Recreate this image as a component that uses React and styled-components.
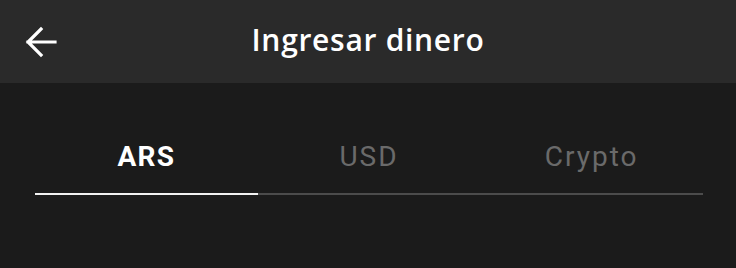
import React, { useState } from "react";
import styled, { createGlobalStyle } from "styled-components";

const GlobalStyle = createGlobalStyle`
  html, body {
    margin: 0;
    padding: 0;
    background: #1b1b1b;
  }
  * {
    box-sizing: border-box;
  }
`;

const TABS = ["ARS", "USD", "Crypto"];

function BackArrow() {
  return (
    <svg width="34" height="34" viewBox="0 0 34 34" fill="none">
      <path
        d="M31 17H4M17 4L4 17L17 30"
        stroke="#fff"
        strokeWidth="3.2"
        strokeLinecap="square"
        strokeLinejoin="miter"
      />
    </svg>
  );
}

function App() {
  const [active, setActive] = useState(0);

  return (
    <Page>
      <GlobalStyle />
      <Header>
        <BackButton aria-label="Volver">
          <BackArrow />
        </BackButton>
        <Title>Ingresar dinero</Title>
      </Header>
      <TabBar>
        {TABS.map((tab, i) => (
          <Tab key={tab} $active={active === i} onClick={() => setActive(i)}>
            {tab}
          </Tab>
        ))}
      </TabBar>
    </Page>
  );
}

const Page = styled.div`
  width: 736px;
  height: 268px;
  background: #1b1b1b;
  overflow: hidden;
`;

const Header = styled.header`
  position: relative;
  height: 83px;
  background: #2a2a2a;
  display: flex;
  align-items: center;
  justify-content: center;
`;

const BackButton = styled.button`
  position: absolute;
  left: 23px;
  top: 24px;
  width: 36px;
  height: 36px;
  padding: 0;
  border: none;
  background: transparent;
  display: flex;
  align-items: center;
  justify-content: center;
  cursor: pointer;
`;

const Title = styled.h1`
  margin: 0;
  margin-top: -4px;
  font-family: "Open Sans", Lato, sans-serif;
  font-weight: 600;
  font-size: 30px;
  line-height: 1;
  letter-spacing: 0.7px;
  color: #fff;
`;

const TabBar = styled.nav`
  display: flex;
  margin: 0 33px 0 35px;
  padding-top: 54px;
`;

const Tab = styled.button`
  flex: 1;
  height: 58px;
  padding: 0 0 22px;
  border: none;
  border-bottom: 2px solid ${(p) => (p.$active ? "#f2f2f2" : "#4c4c4c")};
  background: transparent;
  font-family: Roboto, "Noto Sans", sans-serif;
  font-weight: ${(p) => (p.$active ? 700 : 400)};
  font-size: 28px;
  line-height: 1;
  letter-spacing: ${(p) => (p.$active ? "1.2px" : "2px")};
  color: ${(p) => (p.$active ? "#ffffff" : "#6a6a6a")};
  cursor: pointer;
  display: flex;
  align-items: flex-end;
  justify-content: center;
`;

export default App;
